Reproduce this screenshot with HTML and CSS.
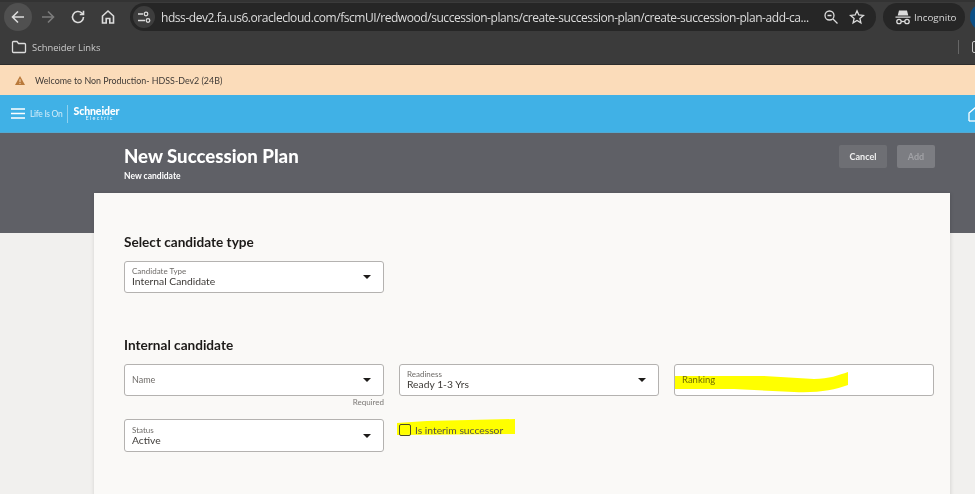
FILE: index.html
```html
<!DOCTYPE html>
<html lang="en">
<head>
<meta charset="utf-8">
<title>New Succession Plan</title>
<link rel="stylesheet" href="styles.css">
</head>
<body>
<div class="page">
  <div class="toolbar">
    <div class="nav-btn">
      <span class="nav-circle"></span>
      <svg width="16" height="16" viewBox="0 0 16 16" class="ic nav-ic"><path d="M14 8H2.500M8 2.500 2.500 8 8 13.500"/></svg>
    </div>
    <div class="nav-btn nav-dim">
      <svg width="16" height="16" viewBox="0 0 16 16" class="ic"><path d="M2 8h11.500M8 2.500 13.500 8 8 13.500"/></svg>
    </div>
    <div class="nav-btn">
      <svg width="16" height="16" viewBox="0 0 16 16" class="ic"><path d="M13.500 8A5.500 5.500 0 1 1 11.800 4L13.500 5.500M13.500 1.800v3.700H9.800"/></svg>
    </div>
    <div class="nav-btn">
      <svg width="16" height="16" viewBox="0 0 16 16" class="ic"><path d="M2.500 7 8 2l5.500 5v7h-3.700V9.500H6.200V14H2.500Z"/></svg>
    </div>
    <div class="omnibox">
      <div class="site-chip">
        <svg width="14" height="14" viewBox="0 0 14 14" class="ic ic-thin"><path d="M6 4H1M8 10.500H1"/><circle cx="9" cy="4" r="1.800"/><circle cx="11" cy="10.500" r="1.800"/></svg>
      </div>
      <span class="url">hdss-dev2.fa.us6.oraclecloud.com/fscmUI/redwood/succession-plans/create-succession-plan/create-succession-plan-add-ca...</span>
      <svg width="16" height="16" viewBox="0 0 16 16" class="ic ic-thin omni-zoom"><circle cx="6.500" cy="6.500" r="4.500"/><path d="M4.500 6.500h4M10 10l4.500 4.500"/></svg>
      <svg width="16" height="16" viewBox="0 0 16 16" class="ic ic-thin omni-star"><path d="M8 1.800 9.800 6l4.600.4-3.500 3 1 4.500L8 11.500 4.100 13.900l1-4.500-3.500-3L6.200 6Z"/></svg>
    </div>
    <div class="incognito">
      <svg width="18" height="16" viewBox="0 0 18 16" class="inc-ic"><path class="inc-fill" d="M5 1.500h8l1.300 5H3.700ZM1.500 7.500h15v1.200h-15Z"/><circle class="inc-ring" cx="5" cy="12.500" r="2.200"/><circle class="inc-ring" cx="13" cy="12.500" r="2.200"/><path class="inc-ring" d="M7.200 12.500h3.600"/></svg>
      <span>Incognito</span>
    </div>
    <div class="avatar"></div>
  </div>
  <div class="bookmarks">
    <svg width="16" height="14" viewBox="0 0 16 14" class="ic ic-thin"><path d="M1.500 2.500a1 1 0 0 1 1-1h3.500l1.500 2h6a1 1 0 0 1 1 1v7a1 1 0 0 1-1 1h-11a1 1 0 0 1-1-1Z"/></svg>
    <span class="bm-label">Schneider Links</span>
    <div class="bm-right">
      <span class="bm-sep"></span>
      <span class="bm-folder"></span>
    </div>
  </div>
  <div class="banner">
    <svg width="12" height="11" viewBox="0 0 12 11" class="warn"><path d="M6 1 11 10H1Z"/><path class="warn-dot" d="M6 4.200v3M6 8v1"/></svg>
    <span>Welcome to Non Production- HDSS-Dev2 (24B)</span>
  </div>
  <div class="brandbar">
    <svg width="14" height="11" viewBox="0 0 14 11" class="burger"><path d="M0 1h14M0 5.500h14M0 10h14"/></svg>
    <span class="lio">Life Is On</span>
    <span class="brand-sep"></span>
    <div class="brand">
      <span class="brand-top">Schneider</span>
      <span class="brand-sub">Electric</span>
    </div>
    <svg width="16" height="16" viewBox="0 0 16 16" class="home"><path d="M1 15V7l7-6 7 6"/><path d="M1 15h14"/></svg>
  </div>
  <div class="header">
    <div class="header-text">
      <h1>New Succession Plan</h1>
      <div class="subtitle">New candidate</div>
    </div>
    <div class="actions">
      <button class="btn" type="button">Cancel</button>
      <button class="btn btn-off" type="button">Add</button>
    </div>
  </div>
  <main class="card">
    <h2 class="h-first">Select candidate type</h2>
    <div class="grid">
      <div class="field"><div class="f-text"><span class="f-label">Candidate Type</span><span class="f-value">Internal Candidate</span></div><i class="caret"></i></div>
    </div>
    <h2 class="h-second">Internal candidate</h2>
    <div class="grid">
      <div class="cell">
        <div class="field"><div class="f-text"><span class="f-ph">Name</span></div><i class="caret"></i></div>
        <div class="help">Required</div>
      </div>
      <div class="cell">
        <div class="field"><div class="f-text"><span class="f-label">Readiness</span><span class="f-value">Ready 1-3 Yrs</span></div><i class="caret"></i></div>
      </div>
      <div class="cell">
        <div class="field"><div class="f-text"><span class="f-ph f-ph-rank">Ranking</span></div></div>
        <svg class="mark mark-rank" width="175" height="23" viewBox="0 0 175 23"><path d="M1 5 90 5 140 8C155 8 165 4 174 1V14C160 19 145 22 120 21L60 18 1 18Z"/></svg>
      </div>
      <div class="cell">
        <div class="field field-tall"><div class="f-text"><span class="f-label">Status</span><span class="f-value">Active</span></div><i class="caret"></i></div>
      </div>
      <div class="cell cell-check">
        <svg class="mark mark-check" width="119" height="16" viewBox="0 0 119 16"><path d="M0 4 30 2 118 0V15L0 16Z"/></svg>
        <label class="check"><span class="box"></span><span>Is interim successor</span></label>
      </div>
    </div>
  </main>
</div>
</body>
</html>
```
FILE: styles.css
```css
* { box-sizing: border-box; }
html, body { margin: 0; padding: 0; }
body { font-family: "Lato", "Liberation Sans", sans-serif; background: #f1f0ee; }
.page { width: 975px; height: 494px; overflow: hidden; position: relative; background: #f1f0ee; }

.toolbar { height: 32px; background: #3b3b3b; border-top: 2px solid #333; display: flex; align-items: center; padding-left: 3px; }
.nav-btn { width: 30px; height: 28px; display: flex; align-items: center; justify-content: center; position: relative; flex: none; }
.nav-circle { position: absolute; left: 1px; top: 0; width: 28px; height: 28px; border-radius: 50%; background: #505050; }
.nav-ic { position: relative; }
.nav-dim { opacity: .4; }
.ic { fill: none; stroke: #dcdcdc; stroke-width: 1.600; }
.ic-thin { stroke-width: 1.300; }
.omnibox { margin-left: 7px; width: 746px; height: 28px; background: #262626; border-radius: 14px; display: flex; align-items: center; padding-left: 3px; flex: none; }
.site-chip { width: 22px; height: 22px; border-radius: 50%; background: #3d3d3d; display: flex; align-items: center; justify-content: center; margin-right: 6px; flex: none; }
.url { font-family: "Open Sans", sans-serif; font-size: 12px; letter-spacing: -.44px; color: #dddddd; white-space: nowrap; width: 655px; flex: none; }
.omni-zoom { margin-left: 7px; flex: none; }
.omni-star { margin-left: 10px; flex: none; }
.incognito { margin-left: 7px; width: 82px; height: 28px; border-radius: 14px; background: #262626; color: #d8d8d8; display: flex; align-items: center; padding-left: 11px; gap: 2px; font-family: "Open Sans", sans-serif; font-size: 9.800px; flex: none; }
.inc-ic { flex: none; }
.inc-fill { fill: #dcdcdc; }
.inc-ring { fill: none; stroke: #dcdcdc; stroke-width: 1.300; }
.avatar { margin-left: 5px; width: 28px; height: 28px; border-radius: 50%; background: #0b4f86; flex: none; }

.bookmarks { height: 33px; background: #3b3b3b; border-bottom: 1px solid #2c2c2c; display: flex; align-items: center; padding-left: 11px; padding-bottom: 2px; }
.bm-label { margin-left: 5px; font-family: "Open Sans", sans-serif; font-size: 9.400px; color: #c9c9c9; }
.bm-right { margin-left: auto; display: flex; align-items: center; gap: 13px; margin-right: -7px; }
.bm-sep { width: 1px; height: 14px; background: #666; }
.bm-folder { width: 10px; height: 12px; border: 1.300px solid #c8c8c8; border-radius: 2px; }

.banner { height: 30px; background: #fbdcba; display: flex; align-items: center; padding-left: 14px; font-size: 8.900px; color: #3f3a36; }
.banner span { margin-left: 9px; }
.warn path { fill: #b9793a; stroke: none; }
.warn .warn-dot { stroke: #fbdcba; stroke-width: 1; fill: none; }

.brandbar { height: 38px; background: #40b1e6; border-bottom: 1px solid #52a9d2; display: flex; align-items: center; padding-left: 11px; color: #fff; position: relative; }
.burger { fill: none; stroke: #fff; stroke-width: 1.500; }
.lio { margin-left: 5px; font-size: 8.500px; letter-spacing: -.3px; opacity: .75; white-space: nowrap; }
.brand-sep { width: 1px; height: 18px; background: #8fd1ef; margin: 0 5px 0 5px; }
.brand { display: flex; flex-direction: column; line-height: 1; }
.brand-top { font-size: 10.500px; font-weight: 900; letter-spacing: -.1px; }
.brand-sub { font-size: 5.500px; letter-spacing: 1.300px; margin-left: 12px; opacity: .85; }
.home { position: absolute; right: -9px; top: 11px; fill: none; stroke: #fff; stroke-width: 1.300; }

.header { height: 100px; background: #5f6066; padding: 12px 40px 0 124px; display: flex; justify-content: space-between; align-items: flex-start; color: #fff; }
h1 { margin: 0; font-size: 18.600px; font-weight: 900; line-height: 23px; }
.subtitle { font-size: 8.500px; font-weight: 700; line-height: 11px; margin-top: 3px; }
.actions { display: flex; gap: 10px; }
.btn { height: 23px; border: 0; border-radius: 2px; background: #6e6f74; color: #f0f0f0; font-family: inherit; font-size: 9px; font-weight: 700; width: 48px; padding: 0; }
.btn-off { background: #7c7d82; color: #a1a2a6; width: 38px; }

.card { width: 856px; height: 340px; margin: -40px 0 0 94px; background: #faf9f7; box-shadow: -1px 0 3px rgba(0,0,0,.08), 2px 0 3px rgba(0,0,0,.06); padding: 41px 16px 0 30px; }
h2 { margin: 0; font-size: 13.600px; font-weight: 700; color: #1d1b19; line-height: 16px; }
.h-second { margin-top: 44px; }
.h-first + .grid, .h-second + .grid { margin-top: 11px; }
.grid { display: grid; grid-template-columns: repeat(3, 260px); column-gap: 15px; row-gap: 23px; }
.cell { position: relative; }
.field { height: 32px; background: #fff; border: 1px solid #b4b2b0; border-radius: 3px; display: flex; align-items: center; padding: 0 12px 0 7px; }
.field-tall { height: 33px; padding-top: 1px; }
.f-text { flex: 1; display: flex; flex-direction: column; color: #3d3a37; }
.f-label { font-size: 8px; line-height: 8px; color: #6f6c69; }
.f-value { font-size: 10.300px; line-height: 13px; color: #3d3a37; }
.f-ph { font-size: 9px; color: #6f6c69; line-height: 12px; }
.f-ph-rank { font-size: 9.500px; }
.caret { width: 0; height: 0; border-left: 4px solid transparent; border-right: 4px solid transparent; border-top: 4px solid #1d1b19; }
.help { position: absolute; right: 0; top: 33px; font-size: 8px; color: #7b7875; line-height: 11px; }
.mark { position: absolute; fill: #ffff00; }
.mark-rank { left: 0; top: 7px; mix-blend-mode: multiply; z-index: 1; }
.mark-check { left: -2px; top: 0; }
.cell-check { padding-top: 4px; }
.check { position: relative; display: flex; align-items: center; gap: 4px; font-size: 10.300px; color: #55534a; line-height: 14px; }
.box { width: 12px; height: 12px; border: 1px solid #4a4a2a; border-radius: 2px; flex: none; }
```
